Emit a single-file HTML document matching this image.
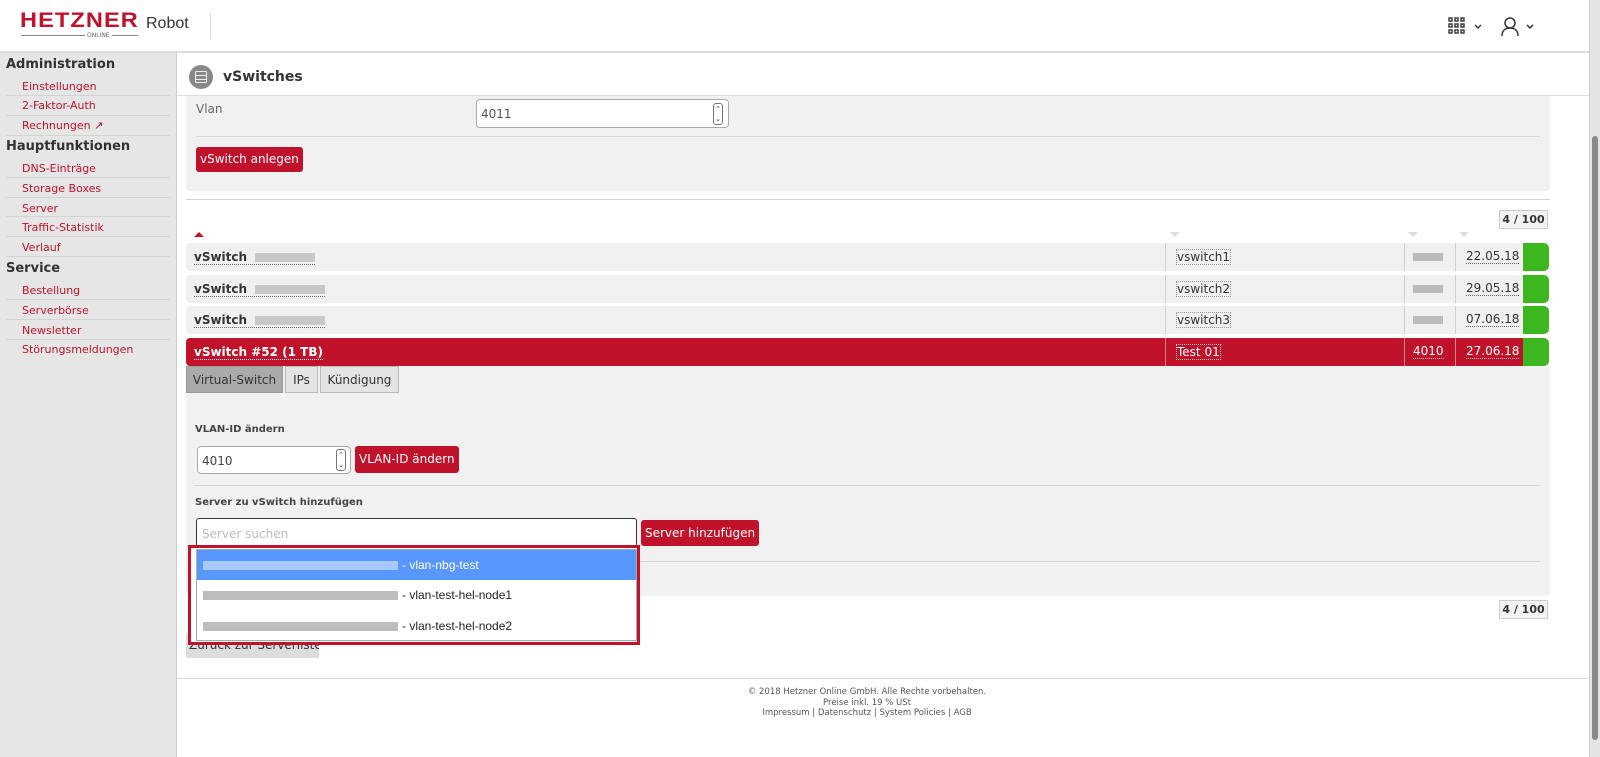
<!DOCTYPE html>
<html><head><meta charset="utf-8"><style>
*{box-sizing:border-box;margin:0;padding:0}
body{width:1600px;height:757px;position:relative;overflow:hidden;background:#fff;font-family:"DejaVu Sans","Liberation Sans",sans-serif;color:#333}
.a{position:absolute}
.side a{position:absolute;left:22px;font-size:11px;color:#c0132b;text-decoration:none}
.sep{position:absolute;left:6px;width:164px;height:1px;background:#d4d4d4}
.sh{position:absolute;left:6px;font-size:13px;font-weight:bold;color:#333}
.row{position:absolute;left:186px;width:1337px;height:28px;background:#f0f0f0;border-radius:4px 0 0 4px}
.row .n{position:absolute;left:8px;top:7px;font-size:12px;font-weight:bold;border-bottom:1px dotted #666}
.row .blur{display:inline-block;width:70px;height:9px;background:#c8c8c8;margin-left:4px;vertical-align:middle}
.row .d{position:absolute;top:0;height:28px;width:1px;background:#d0d0d0}
.row .c{position:absolute;top:6px;font-size:12px}
.g{position:absolute;left:1523px;width:26px;height:28px;background:#3db71f;border-radius:0 5px 5px 0}
.btn{position:absolute;background:#c0132b;color:#fff;font-size:12px;border-radius:3px;padding:0 4px;line-height:26px;white-space:nowrap}
.hl{position:absolute;height:1px;background:#d6d6d6}
.cnt{position:absolute;left:1499px;width:49px;height:19px;border:1px solid #ccc;background:#f3f3f3;font-size:11px;font-weight:bold;text-align:center;line-height:17px}
.spin{position:absolute;width:10px;height:22px;border:1px solid #777;border-radius:3px;font-size:7px;line-height:10px;text-align:center}
.opt{position:absolute;left:197px;width:439px;height:30px;font-size:12px;font-family:"Liberation Sans",sans-serif;line-height:30px;padding-left:6px;color:#222}
.ob{display:inline-block;width:195px;height:9px;background:#bdbdbd;vertical-align:middle;margin-right:4px}
</style></head><body>
<!-- header -->
<div class="a" style="left:20px;top:9px;font-size:21px;font-weight:900;color:#c0132b;font-family:'Liberation Sans',sans-serif;letter-spacing:1px;transform:scaleX(1.12);transform-origin:left">HETZNER</div>
<div class="a" style="left:21px;top:35px;width:117px;height:1px;background:#888"></div>
<div class="a" style="left:85px;top:32px;font-size:6px;background:#fff;padding:0 2px;color:#666">ONLINE</div>
<div class="a" style="left:146px;top:15px;font-size:16px;color:#333;font-family:'Liberation Sans',sans-serif">Robot</div>
<div class="a" style="left:210px;top:13px;width:1px;height:26px;background:#ddd"></div>
<svg class="a" style="left:1448px;top:17px" width="40" height="20"><g fill="none" stroke="#333" stroke-width="1.4"><rect x="1" y="1" width="3" height="3"/><rect x="7" y="1" width="3" height="3"/><rect x="13" y="1" width="3" height="3"/><rect x="1" y="7" width="3" height="3"/><rect x="7" y="7" width="3" height="3"/><rect x="13" y="7" width="3" height="3"/><rect x="1" y="13" width="3" height="3"/><rect x="7" y="13" width="3" height="3"/><rect x="13" y="13" width="3" height="3"/><path d="M27 8l3 3 3-3"/></g></svg>
<svg class="a" style="left:1500px;top:16px" width="40" height="22"><g fill="none" stroke="#333" stroke-width="1.5"><circle cx="10" cy="7" r="5"/><path d="M2 20c0-6 4-8 8-8s8 2 8 8"/><path d="M27 9l3 3 3-3"/></g></svg>
<div class="a" style="left:0;top:51px;width:1589px;height:2px;background:#ddd"></div>
<!-- scrollbar -->
<div class="a" style="left:1589px;top:0;width:11px;height:757px;background:#e4e4e4;border-left:1px solid #ccc"></div>
<div class="a" style="left:1592px;top:136px;width:6px;height:604px;background:#8a8a8a;border-radius:3px"></div>
<!-- sidebar -->
<div class="a side" style="left:0;top:53px;width:177px;height:704px;background:#e6e6e6;border-right:1px solid #ccc">
<div class="sh" style="top:4px">Administration</div>
<a style="top:27px">Einstellungen</a><div class="sep" style="top:42px"></div>
<a style="top:46px">2-Faktor-Auth</a><div class="sep" style="top:62px"></div>
<a style="top:66px">Rechnungen ↗</a><div class="sep" style="top:82px"></div>
<div class="sh" style="top:86px">Hauptfunktionen</div>
<a style="top:109px">DNS-Einträge</a><div class="sep" style="top:124px"></div>
<a style="top:129px">Storage Boxes</a><div class="sep" style="top:144px"></div>
<a style="top:149px">Server</a><div class="sep" style="top:163px"></div>
<a style="top:168px">Traffic-Statistik</a><div class="sep" style="top:183px"></div>
<a style="top:188px">Verlauf</a><div class="sep" style="top:203px"></div>
<div class="sh" style="top:208px">Service</div>
<a style="top:231px">Bestellung</a><div class="sep" style="top:246px"></div>
<a style="top:251px">Serverbörse</a><div class="sep" style="top:266px"></div>
<a style="top:271px">Newsletter</a><div class="sep" style="top:286px"></div>
<a style="top:290px">Störungsmeldungen</a>
</div>
<!-- title -->
<div class="a" style="left:189px;top:65px;width:24px;height:24px;border-radius:50%;background:#888"></div>
<div class="a" style="left:195px;top:71px;width:12px;height:12px;border:1px solid #eee;border-radius:1px;background:repeating-linear-gradient(#888 0 3px,#eee 3px 4px)"></div>
<div class="a" style="left:223px;top:69px;font-size:14px;font-weight:bold;color:#333">vSwitches</div>
<div class="a" style="left:177px;top:95px;width:1412px;height:1px;background:#ddd"></div>
<!-- top panel -->
<div class="a" style="left:186px;top:96px;width:1364px;height:95px;background:#f1f1f1;border-radius:0 0 4px 4px"></div>
<div class="a" style="left:196px;top:102px;font-size:12px;color:#666">Vlan</div>
<div class="a" style="left:476px;top:99px;width:253px;height:29px;background:#fff;border:1px solid #aaa;border-radius:4px;font-size:12px;padding:7px 4px;color:#555">4011</div>
<div class="spin" style="left:713px;top:103px">⌃<br>⌄</div>
<div class="hl" style="left:196px;top:136px;width:1344px"></div>
<div class="btn" style="left:196px;top:147px;height:25px;line-height:25px">vSwitch anlegen</div>
<div class="hl" style="left:186px;top:199px;width:1364px"></div>
<div class="cnt" style="top:210px">4 / 100</div>
<div class="a" style="left:194px;top:232px;width:0;height:0;border:5px solid transparent;border-bottom-color:#c0132b;border-top:0"></div>
<div class="a" style="left:1170px;top:232px;border:5px solid transparent;border-top-color:#ddd;border-bottom:0"></div>
<div class="a" style="left:1408px;top:232px;border:5px solid transparent;border-top-color:#ddd;border-bottom:0"></div>
<div class="a" style="left:1459px;top:232px;border:5px solid transparent;border-top-color:#ddd;border-bottom:0"></div>
<!-- rows -->
<div class="row" style="top:243px"><span class="n">vSwitch <span class="blur" style="width:60px"></span></span><div class="d" style="left:979px"></div><span class="c" style="left:990px;border:1px dotted #999">vswitch1</span><div class="d" style="left:1218px"></div><span class="c" style="left:1227px;width:30px;height:8px;top:10px;background:#bbb"></span><div class="d" style="left:1269px"></div><span class="c" style="left:1280px;border-bottom:1px dotted #666">22.05.18</span></div><div class="g" style="top:243px"></div>
<div class="row" style="top:275px"><span class="n">vSwitch <span class="blur"></span></span><div class="d" style="left:979px"></div><span class="c" style="left:990px;border:1px dotted #999">vswitch2</span><div class="d" style="left:1218px"></div><span class="c" style="left:1227px;width:30px;height:8px;top:10px;background:#bbb"></span><div class="d" style="left:1269px"></div><span class="c" style="left:1280px;border-bottom:1px dotted #666">29.05.18</span></div><div class="g" style="top:275px"></div>
<div class="row" style="top:306px"><span class="n">vSwitch <span class="blur"></span></span><div class="d" style="left:979px"></div><span class="c" style="left:990px;border:1px dotted #999">vswitch3</span><div class="d" style="left:1218px"></div><span class="c" style="left:1227px;width:30px;height:8px;top:10px;background:#bbb"></span><div class="d" style="left:1269px"></div><span class="c" style="left:1280px;border-bottom:1px dotted #666">07.06.18</span></div><div class="g" style="top:306px"></div>
<div class="row" style="top:338px;background:#c0132b;color:#fff"><span class="n" style="border-color:#fff">vSwitch #52 (1 TB)</span><div class="d" style="left:979px;background:#e88"></div><span class="c" style="left:990px;border:1px dotted #fcc">Test 01</span><div class="d" style="left:1218px;background:#e88"></div><span class="c" style="left:1227px;border-bottom:1px dotted #fcc">4010</span><div class="d" style="left:1269px;background:#e88"></div><span class="c" style="left:1280px;border-bottom:1px dotted #fcc">27.06.18</span></div><div class="g" style="top:338px"></div>
<!-- detail panel -->
<div class="a" style="left:186px;top:366px;width:1364px;height:230px;background:#f1f1f1;border-radius:0 0 4px 4px"></div>
<div class="a" style="left:186px;top:366px;width:97px;height:27px;background:#aaa;border:1px solid #999;font-size:12px;text-align:center;line-height:26px">Virtual-Switch</div>
<div class="a" style="left:285px;top:366px;width:33px;height:27px;background:#e4e4e4;border:1px solid #bbb;font-size:12px;text-align:center;line-height:26px">IPs</div>
<div class="a" style="left:320px;top:366px;width:79px;height:27px;background:#e4e4e4;border:1px solid #bbb;font-size:12px;text-align:center;line-height:26px">Kündigung</div>
<div class="a" style="left:195px;top:424px;font-size:10px;font-weight:bold;color:#444">VLAN-ID ändern</div>
<div class="a" style="left:197px;top:446px;width:154px;height:28px;background:#fff;border:1px solid #aaa;border-radius:4px;font-size:12px;padding:7px 4px;color:#444">4010</div>
<div class="spin" style="left:336px;top:449px">⌃<br>⌄</div>
<div class="btn" style="left:355px;top:446px;height:27px;line-height:27px">VLAN-ID ändern</div>
<div class="hl" style="left:194px;top:485px;width:1346px"></div>
<div class="a" style="left:195px;top:497px;font-size:10px;font-weight:bold;color:#444">Server zu vSwitch hinzufügen</div>
<div class="a" style="left:196px;top:518px;width:441px;height:29px;background:#fff;border:1px solid #333;border-radius:3px;font-size:12px;padding:8px 5px;color:#bbb">Server suchen</div>
<div class="btn" style="left:641px;top:520px;height:26px">Server hinzufügen</div>
<div class="hl" style="left:194px;top:561px;width:1346px"></div>
<div class="cnt" style="top:600px">4 / 100</div>
<div class="a" style="left:186px;top:634px;width:133px;height:24px;background:#ddd;font-size:12px;padding:4px 3px;white-space:nowrap;overflow:hidden">Zurück zur Serverliste</div>
<!-- dropdown -->
<div class="a" style="left:188px;top:545px;width:452px;height:100px;border:3px solid #c0132b;background:#fff"></div>
<div class="a" style="left:196px;top:549px;width:441px;height:92px;border:1px solid #aaa;background:#fff"></div>
<div class="opt" style="top:550px;background:#5897fb;color:#fff"><span class="ob" style="background:#a9c9fc"></span>- vlan-nbg-test</div>
<div class="opt" style="top:580px"><span class="ob"></span>- vlan-test-hel-node1</div>
<div class="opt" style="top:611px"><span class="ob"></span>- vlan-test-hel-node2</div>
<!-- footer -->
<div class="a" style="left:177px;top:678px;width:1412px;height:1px;background:#ddd"></div>
<div class="a" style="left:177px;top:687px;width:1380px;text-align:center;font-size:8.5px;line-height:10.5px;color:#555">© 2018 Hetzner Online GmbH. Alle Rechte vorbehalten.<br>Preise inkl. 19 % USt<br>Impressum | Datenschutz | System Policies | AGB</div>
</body></html>
